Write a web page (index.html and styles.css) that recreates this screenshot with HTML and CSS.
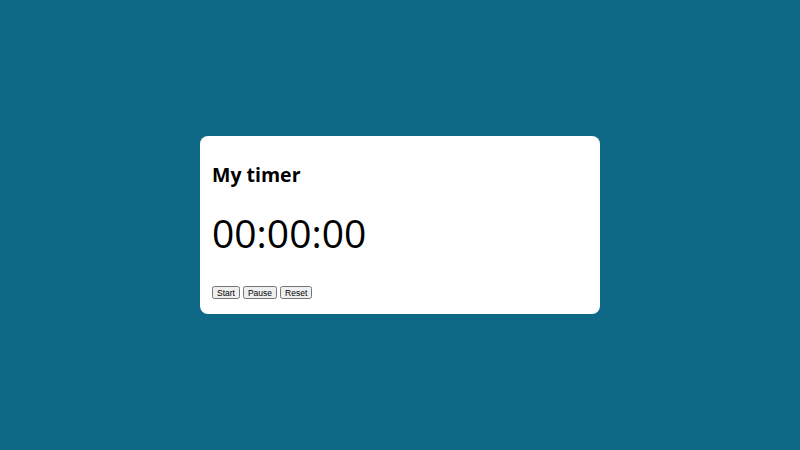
FILE: index.html
```html
<!DOCTYPE html>
<html lang="en">
<head>
    <meta charset="UTF-8">
    <meta name="viewport" content="width=device-width, initial-scale=1.0">
    <title>My timer</title>
    <link rel="stylesheet" href="styles.css">
</head>
<body>
    <div class="timer-card">
        <h3 class="timer-title">My timer</h3>
        <div id="display" class="timer-display">00:00:00</div>
        <div class="timer-controls">
            <button class="timer-button" onclick="startTimer()">Start</button>
            <button class="timer-button" onclick="pauseTimer()">Pause</button>
            <button class="timer-button" onclick="resetTimer()">Reset</button>
        </div>
    </div>

    <script>
        var seconds = 0;
        var ticker = null;

        function pad(n) {
            return n < 10 ? '0' + n : '' + n;
        }
        function render() {
            var h = Math.floor(seconds / 3600);
            var m = Math.floor(seconds / 60) % 60;
            var s = seconds % 60;
            document.getElementById('display').textContent = pad(h) + ':' + pad(m) + ':' + pad(s);
        }
        function startTimer() {
            if (ticker) return;
            ticker = setInterval(function() {
                seconds++;
                render();
            }, 1000);
        }
        function pauseTimer() {
            clearInterval(ticker);
            ticker = null;
        }
        function resetTimer() {
            pauseTimer();
            seconds = 0;
            render();
        }
    </script>
</body>
</html>
```

FILE: styles.css
```css
html, body {
    height: 100%;
}

body {
    margin: 0;
    background-color: #0e6987;
    font-family: 'Open Sans', sans-serif;
    color: #000;
    display: flex;
    align-items: center;
    justify-content: center;
}

/* White card holding the timer */
.timer-card {
    width: 400px;
    box-sizing: border-box;
    padding: 25px 12px 15px;
    background-color: #fff;
    border-radius: 8px;
}

.timer-title {
    margin: 0;
    font-size: 19.5px;
    font-weight: bold;
}

.timer-display {
    margin: 18px 0 27px;
    font-size: 39px;
}

.timer-controls {
    display: flex;
    gap: 3px;
}

.timer-button {
    font-family: 'Liberation Sans', Arial, sans-serif;
    font-size: 8.5px;
    padding: 0 3px;
    height: 13px;
    line-height: 11px;
}
```
